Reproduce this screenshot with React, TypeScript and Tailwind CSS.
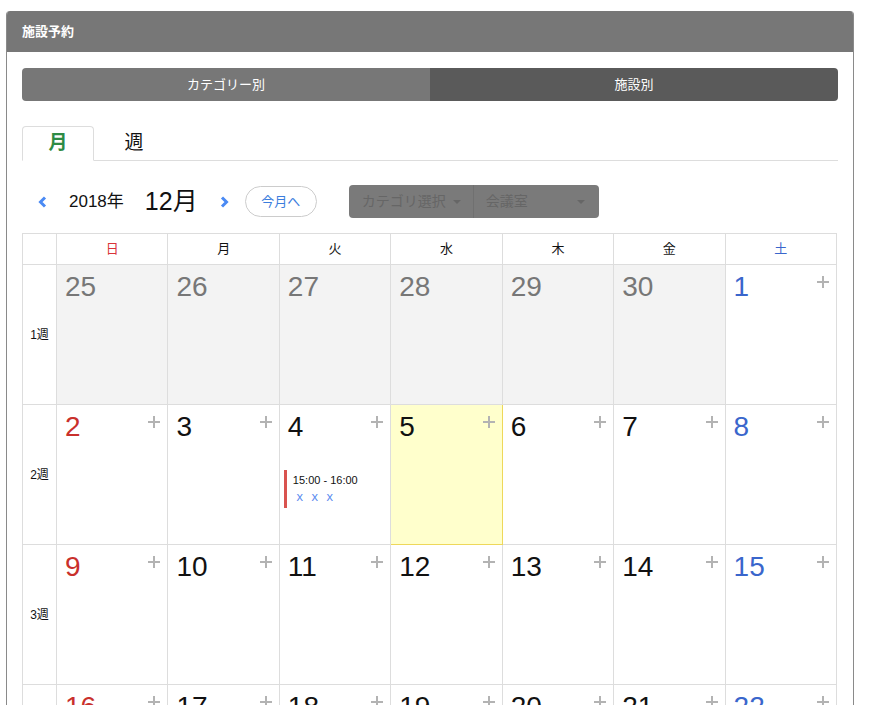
import React from 'react';

type Day = {
  d: number;
  cur: boolean;
  today?: boolean;
  event?: { time: string; title: string };
};

const FONT = { fontFamily: '"Liberation Sans", "Noto Sans CJK JP", sans-serif' };

const WEEKDAYS = ['日', '月', '火', '水', '木', '金', '土'];

function buildWeeks(): Day[][] {
  const days: Day[] = [];
  for (let d = 25; d <= 30; d++) days.push({ d, cur: false });
  for (let d = 1; d <= 31; d++) days.push({ d, cur: true, today: d === 5 });
  for (let d = 1; d <= 5; d++) days.push({ d, cur: false });
  days[9].event = { time: '15:00 - 16:00', title: 'ｘｘｘ' };
  const weeks: Day[][] = [];
  for (let i = 0; i < days.length; i += 7) weeks.push(days.slice(i, i + 7));
  return weeks;
}

function Plus() {
  return (
    <svg width="12" height="12" viewBox="0 0 12 12" className="absolute right-[7px] top-[11px]">
      <path d="M6 0v12M0 6h12" stroke="#b3b3b3" strokeWidth="2" />
    </svg>
  );
}

function Chevron({ dir }: { dir: 'left' | 'right' }) {
  return (
    <svg width="9" height="12" viewBox="0 0 9 12">
      <path
        d={dir === 'left' ? 'M7 1.5L2.5 6L7 10.5' : 'M2 1.5L6.5 6L2 10.5'}
        fill="none"
        stroke="#4a8af4"
        strokeWidth="3"
      />
    </svg>
  );
}

function Caret() {
  return <span className="inline-block border-x-[4px] border-t-[4px] border-x-transparent border-t-[#666]" />;
}

function numberColor(day: Day, col: number) {
  if (!day.cur) return 'text-[#777]';
  if (col === 0) return 'text-[#c9302c]';
  if (col === 6) return 'text-[#3a66cc]';
  return 'text-[#111]';
}

function DayCell({ day, col }: { day: Day; col: number }) {
  const bg = !day.cur ? 'bg-[#f3f3f3]' : day.today ? 'bg-[#ffffcc]' : 'bg-white';
  const border = day.today ? 'border-[#eed85a]' : 'border-[#ddd]';
  return (
    <div className={`relative h-[140px] border-r border-b ${border} ${bg}`}>
      <div className={`pl-[8px] pt-[8px] text-[28px] leading-none ${numberColor(day, col)}`}>{day.d}</div>
      {day.cur && <Plus />}
      {day.event && (
        <div className="ml-[4px] mt-[29px] border-l-[3px] border-[#d9534f] py-[2px] pl-[6px]">
          <div className="text-[11px] leading-[17px] text-[#111]">{day.event.time}</div>
          <div className="pl-[1px] text-[12px] leading-[17px] tracking-[3px] text-[#5b8def]">{day.event.title}</div>
        </div>
      )}
    </div>
  );
}

export default function App() {
  const weeks = buildWeeks();
  return (
    <div className="h-[705px] overflow-hidden bg-white" style={FONT}>
      <div className="ml-[6px] mt-[11px] w-[848px] overflow-hidden rounded-t-[4px] border border-t-0 border-[#8a8a8a]">
        <div className="flex h-[41px] items-center bg-[#777] px-[15px] text-[13px] font-bold text-white">施設予約</div>

        <div className="px-[15px] pt-[16px]">
          <div className="flex h-[33px] overflow-hidden rounded-[4px] text-[13px] text-white">
            <div className="flex flex-1 items-center justify-center bg-[#777]">カテゴリー別</div>
            <div className="flex flex-1 items-center justify-center bg-[#5a5a5a]">施設別</div>
          </div>

          <div className="mt-[25px] flex h-[35px] border-b border-[#ddd]">
            <div className="-mb-px flex w-[72px] items-center justify-center rounded-t-[4px] border border-b-white border-[#ddd] bg-white text-[19px] font-bold text-[#2e8b45]">
              月
            </div>
            <div className="ml-[4px] flex w-[72px] items-center justify-center text-[19px] text-[#111]">週</div>
          </div>

          <div className="mt-[24px] flex h-[33px] items-center">
            <div className="ml-[16px] flex items-center">
              <Chevron dir="left" />
            </div>
            <div className="ml-[22px] text-[17px] text-[#111]">2018年</div>
            <div className="ml-[21px] text-[25px] text-[#111]">12月</div>
            <div className="ml-[22px] flex items-center">
              <Chevron dir="right" />
            </div>
            <button className="ml-[16px] h-[31px] w-[72px] rounded-full border border-[#ccc] bg-white text-[13px] text-[#3b7ddd]">
              今月へ
            </button>
            <div className="ml-[32px] flex h-[33px] w-[250px] overflow-hidden rounded-[4px] bg-[#7a7a7a] text-[14px] text-[#666]">
              <div className="flex w-[125px] items-center justify-between border-r border-[#707070] pl-[13px] pr-[12px]">
                <span>カテゴリ選択</span>
                <Caret />
              </div>
              <div className="flex flex-1 items-center justify-between pl-[12px] pr-[14px]">
                <span>会議室</span>
                <Caret />
              </div>
            </div>
          </div>

          <div className="mt-[15px] w-[815px] border-l border-t border-[#ddd]">
            <div className="grid grid-cols-[34px_repeat(7,minmax(0,1fr))]">
              <div className="h-[31px] border-r border-b border-[#ddd]" />
              {WEEKDAYS.map((w, i) => (
                <div
                  key={w}
                  className={`flex h-[31px] items-center justify-center border-r border-b border-[#ddd] text-[13px] ${
                    i === 0 ? 'text-[#d9343a]' : i === 6 ? 'text-[#3a66cc]' : 'text-[#111]'
                  }`}
                >
                  {w}
                </div>
              ))}
            </div>
            {weeks.map((week, wi) => (
              <div key={wi} className="grid grid-cols-[34px_repeat(7,minmax(0,1fr))]">
                <div className="flex h-[140px] items-center justify-center border-r border-b border-[#ddd] text-[12px] text-[#111]">
                  {wi + 1}週
                </div>
                {week.map((day, ci) => (
                  <DayCell key={ci} day={day} col={ci} />
                ))}
              </div>
            ))}
          </div>
          <div className="h-[20px]" />
        </div>
      </div>
    </div>
  );
}
